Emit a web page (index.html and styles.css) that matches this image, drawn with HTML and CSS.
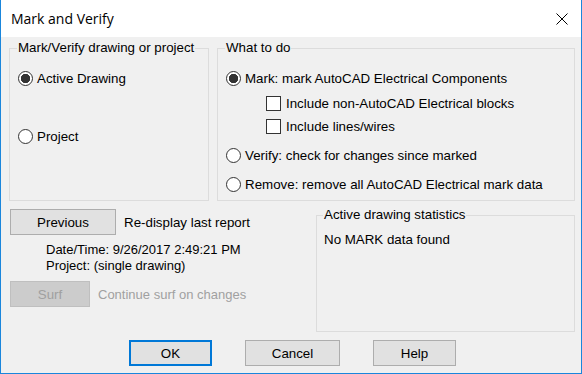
FILE: index.html
```html
<!DOCTYPE html>
<html>
<head>
<meta charset="utf-8">
<title>Mark and Verify</title>
<link rel="stylesheet" href="styles.css">
</head>
<body>
<div class="window">
  <div class="titlebar">
    <span class="title">Mark and Verify</span>
    <span class="close"><svg width="12" height="12" viewBox="0 0 12 12"><path d="M0.5 0.5 L11.5 11.5 M11.5 0.5 L0.5 11.5" stroke="#000" stroke-width="1" fill="none"/></svg></span>
  </div>
  <div class="content">
    <div class="top-row">
      <fieldset class="group g-target">
        <legend>Mark/Verify drawing or project</legend>
        <label class="opt"><span class="radio checked"></span>Active Drawing</label>
        <label class="opt opt-project"><span class="radio"></span>Project</label>
      </fieldset>
      <fieldset class="group g-todo">
        <legend>What to do</legend>
        <label class="opt"><span class="radio checked"></span>Mark: mark AutoCAD Electrical Components</label>
        <label class="opt sub sub-first"><span class="check"></span>Include non-AutoCAD Electrical blocks</label>
        <label class="opt sub sub-second"><span class="check"></span>Include lines/wires</label>
        <label class="opt opt-verify"><span class="radio"></span>Verify: check for changes since marked</label>
        <label class="opt opt-remove"><span class="radio"></span>Remove: remove all AutoCAD Electrical mark data</label>
      </fieldset>
    </div>
    <div class="mid-row">
      <div class="left-col">
        <div class="btn-line">
          <button class="btn btn-prev">Previous</button>
          <span>Re-display last report</span>
        </div>
        <div class="info">
          <div>Date/Time: 9/26/2017 2:49:21 PM</div>
          <div>Project: (single drawing)</div>
        </div>
        <div class="btn-line surf-line">
          <button class="btn btn-surf" disabled>Surf</button>
          <span class="disabled-text">Continue surf on changes</span>
        </div>
      </div>
      <fieldset class="group g-stats">
        <legend>Active drawing statistics</legend>
        <div class="stats-text">No MARK data found</div>
      </fieldset>
    </div>
    <div class="btn-row">
      <button class="btn btn-ok">OK</button>
      <button class="btn btn-cancel">Cancel</button>
      <button class="btn btn-help">Help</button>
    </div>
  </div>
</div>
</body>
</html>
```

FILE: styles.css
```css
* { box-sizing: border-box; }
html, body { margin: 0; padding: 0; }
body {
  width: 582px;
  height: 374px;
  overflow: hidden;
  font-family: "Liberation Sans", Arial, sans-serif;
  font-size: 13.33px;
  color: #000;
  background: #f0f0f0;
}
.window {
  width: 582px;
  height: 374px;
  background: #f0f0f0;
  border-left: 1px solid #1a86dc;
  border-right: 1px solid #1a86dc;
  border-bottom: 1px solid #1a86dc;
}
.titlebar {
  height: 37px;
  background: #fff;
  display: flex;
  align-items: center;
  justify-content: space-between;
  padding: 0 13px 0 10px;
}
.title {
  font-family: "Open Sans", "Noto Sans", sans-serif;
  font-size: 14px;
  line-height: 18px;
}
.close { display: flex; width: 12px; height: 12px; }
.close svg { display: block; }
.content {
  padding: 3px 6px 0 8px;
}
.top-row {
  display: grid;
  grid-template-columns: 200px 358px;
  column-gap: 8px;
}
.group {
  margin: 0;
  padding: 12px 8px 0 8px;
  border: 1px solid #dcdcdc;
  min-width: 0;
}
.group legend {
  padding: 0 1px;
  margin-left: -1px;
  line-height: 16px;
  font-size: 13.33px;
}
.g-target, .g-todo { height: 161px; }
.opt {
  display: flex;
  align-items: center;
  height: 20px;
  gap: 4px;
  white-space: nowrap;
}
.opt-project { margin-top: 38px; }
.sub { margin-left: 40px; gap: 5px; }
.sub-first { margin-top: 5px; }
.sub-second { margin-top: 3px; }
.opt-verify { margin-top: 9px; }
.opt-remove { margin-top: 9px; }
.radio {
  flex: none;
  width: 15px;
  height: 15px;
  border: 1px solid #333;
  border-radius: 50%;
  background: #fff;
}
.radio.checked {
  background: radial-gradient(circle, #333 0 4.4px, #fff 5px);
}
.check {
  flex: none;
  width: 15px;
  height: 15px;
  border: 1px solid #333;
  background: #fff;
}
.mid-row {
  display: flex;
}
.left-col {
  width: 307px;
  padding-left: 1px;
}
.btn {
  font-family: "Liberation Sans", Arial, sans-serif;
  font-size: 13.33px;
  color: #000;
  height: 26px;
  padding: 0;
  background: #e1e1e1;
  border: 1px solid #adadad;
  border-radius: 0;
  margin: 0;
}
.btn-line {
  display: flex;
  align-items: center;
  gap: 8px;
  margin-top: 8px;
}
.btn-prev { width: 106px; }
.info {
  margin-top: 7px;
  margin-left: 36px;
  line-height: 16px;
  font-size: 13px;
}
.surf-line { margin-top: 7px; }
.btn-surf {
  width: 80px;
  background: #cccccc;
  border-color: #bfbfbf;
  color: #a0a0a0;
}
.disabled-text { color: #a0a0a0; font-size: 13px; }
.g-stats {
  width: 259px;
  height: 125px;
  margin-top: 6px;
  padding: 9px 7px 0 7px;
}
.stats-text { line-height: 16px; }
.btn-row {
  display: flex;
  gap: 33px;
  margin-top: 8px;
  padding-left: 120px;
}
.btn-ok {
  width: 83px;
  border: 2px solid #0078d7;
}
.btn-cancel { width: 95px; }
.btn-help { width: 83px; }
```
